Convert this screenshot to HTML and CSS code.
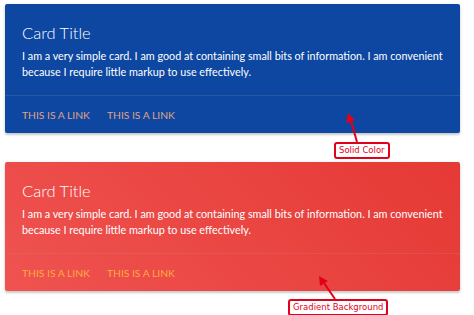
FILE: index.html
```html
<!DOCTYPE html>
<html lang="en">
<head>
    <meta charset="UTF-8">
    <title>Cards</title>
    <link rel="stylesheet" href="styles.css">
</head>
<body>
    <div class="page">
        <div class="card card-blue">
            <div class="card-content">
                <div class="card-title">Card Title</div>
                <p>I am a very simple card. I am good at containing small bits of information. I am convenient because I require little markup to use effectively.</p>
            </div>
            <div class="card-action">
                <a href="#">This is a link</a>
                <a href="#">This is a link</a>
            </div>
        </div>
        <div class="card card-red">
            <div class="card-content">
                <div class="card-title">Card Title</div>
                <p>I am a very simple card. I am good at containing small bits of information. I am convenient because I require little markup to use effectively.</p>
            </div>
            <div class="card-action">
                <a href="#">This is a link</a>
                <a href="#">This is a link</a>
            </div>
        </div>

        <!-- annotations -->
        <svg class="arrows" width="474" height="315" viewBox="0 0 474 315">
            <line x1="357" y1="142" x2="351" y2="121" stroke="#e3001b" stroke-width="2"/>
            <polygon points="348,113 346,123 355,120" fill="#e3001b"/>
            <line x1="335" y1="299" x2="324" y2="283" stroke="#e3001b" stroke-width="2"/>
            <polygon points="319,276 320,286 328,281" fill="#e3001b"/>
        </svg>
        <div class="note note-solid">Solid Color</div>
        <div class="note note-gradient">Gradient Background</div>
    </div>
</body>
</html>
```

FILE: styles.css
```css
body {
    margin: 0;
    padding: 0;
    background: #ffffff;
    font-family: Lato, "Noto Sans", sans-serif;
}
.page {
    position: relative;
    width: 474px;
    height: 315px;
    padding: 4px 0 0 5px;
    box-sizing: border-box;
    display: flex;
    flex-direction: column;
    gap: 29px;
}
.card {
    width: 455px;
    border-radius: 2px;
    color: #ffffff;
    box-shadow: 0 2px 2px rgba(0, 0, 0, 0.14), 0 1px 4px rgba(0, 0, 0, 0.12);
}
.card-blue {
    background: #0d47a1;
}
.card-red {
    background: linear-gradient(45deg, #ef5350 0%, #e53935 100%);
}
.card-content {
    padding: 16px 12px 15px 17px;
}
.card-title {
    font-size: 16.5px;
    font-weight: 300;
    line-height: 26px;
}
.card-content p {
    margin: 2px 0 0 0;
    font-size: 10.8px;
    line-height: 16px;
}
.card-action {
    border-top: 1px solid rgba(160, 160, 160, 0.2);
    padding: 11px 17px 10px 17px;
    display: flex;
    gap: 17px;
}
.card-action a {
    color: #ffab40;
    text-decoration: none;
    text-transform: uppercase;
    font-size: 10.3px;
    line-height: 16px;
}
.card-blue .card-action a {
    color: #e0a384;
}
.arrows {
    position: absolute;
    left: 0;
    top: 0;
}
.note {
    position: absolute;
    background: #ffffff;
    border: 2px solid #e3001b;
    border-radius: 3px;
    color: #e3001b;
    font-family: "DejaVu Sans", sans-serif;
    font-size: 8.5px;
    line-height: 11px;
    padding: 1px 3px;
}
.note-solid {
    left: 334px;
    top: 142px;
}
.note-gradient {
    left: 288px;
    top: 299px;
}
```
